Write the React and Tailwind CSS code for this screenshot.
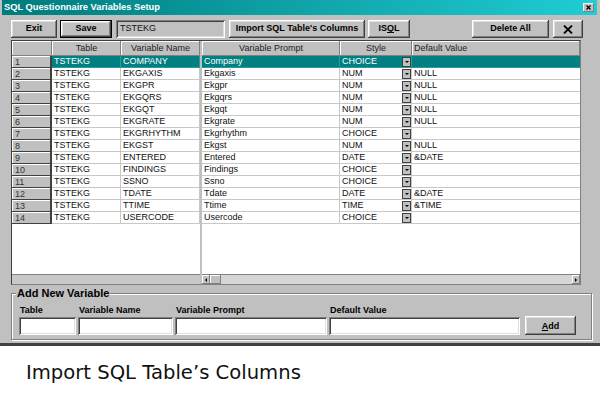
import React from "react";

const RAISED =
  "shadow-[inset_-1px_-1px_#404040,inset_1px_1px_#ffffff,inset_-2px_-2px_#808080,inset_2px_2px_#dfdfdf]";
const SUNKEN =
  "shadow-[inset_1px_1px_#808080,inset_-1px_-1px_#ffffff,inset_2px_2px_#404040,inset_-2px_-2px_#dfdfdf]";
const HEAD = "shadow-[inset_-1px_-1px_#808080,inset_1px_1px_#ffffff]";

const rows = [
  ["TSTEKG", "COMPANY", "Company", "CHOICE", ""],
  ["TSTEKG", "EKGAXIS", "Ekgaxis", "NUM", "NULL"],
  ["TSTEKG", "EKGPR", "Ekgpr", "NUM", "NULL"],
  ["TSTEKG", "EKGQRS", "Ekgqrs", "NUM", "NULL"],
  ["TSTEKG", "EKGQT", "Ekgqt", "NUM", "NULL"],
  ["TSTEKG", "EKGRATE", "Ekgrate", "NUM", "NULL"],
  ["TSTEKG", "EKGRHYTHM", "Ekgrhythm", "CHOICE", ""],
  ["TSTEKG", "EKGST", "Ekgst", "NUM", "NULL"],
  ["TSTEKG", "ENTERED", "Entered", "DATE", "&DATE"],
  ["TSTEKG", "FINDINGS", "Findings", "CHOICE", ""],
  ["TSTEKG", "SSNO", "Ssno", "CHOICE", ""],
  ["TSTEKG", "TDATE", "Tdate", "DATE", "&DATE"],
  ["TSTEKG", "TTIME", "Ttime", "TIME", "&TIME"],
  ["TSTEKG", "USERCODE", "Usercode", "CHOICE", ""],
];

function Button({ className = "", children }) {
  return (
    <div
      className={`h-[18px] bg-[#c0c0c0] flex items-center justify-center text-[9px] font-bold text-black ${RAISED} ${className}`}
    >
      {children}
    </div>
  );
}

function DropButton() {
  return (
    <div className="w-[9px] h-[10px] bg-[#c0c0c0] border border-[#404040] flex items-center justify-center shrink-0">
      <div className="w-0 h-0 border-x-[2px] border-x-transparent border-t-[2px] border-t-black" />
    </div>
  );
}

export default function App() {
  return (
    <div className="w-[600px] h-[395px] bg-white overflow-hidden font-['Liberation_Sans',Arial,sans-serif]">
      {/* window */}
      <div className="h-[346px] bg-[#c0c0c0] pl-[2px] pr-[3px] border-b-[3px] border-b-[#404040] flex flex-col">
        {/* title bar */}
        <div className="h-[15px] shrink-0 flex items-center justify-between pl-[2px] pr-[3px] bg-gradient-to-r from-[#007b7d] to-[#1fcdd5]">
          <span className="text-[9.3px] font-bold text-white leading-none">
            SQL Questionnaire Variables Setup
          </span>
          <div className={`w-[11px] h-[9px] bg-[#c0c0c0] flex items-center justify-center ${HEAD}`}>
            <svg width="5" height="5" viewBox="0 0 5 5">
              <path d="M0.5 0.5 L4.5 4.5 M4.5 0.5 L0.5 4.5" stroke="#000" strokeWidth="1.3" />
            </svg>
          </div>
        </div>

        {/* toolbar */}
        <div className="mt-[5px] flex items-center pl-[9px]">
          <Button className="w-[46px]">Exit</Button>
          <div className="ml-[3px] w-[52px] h-[18px] border border-black">
            <Button className="w-full h-full">Save</Button>
          </div>
          <div className={`ml-[4px] w-[109px] h-[18px] bg-[#c0c0c0] pl-[4px] pt-[2px] text-[9px] text-[#111] ${SUNKEN}`}>
            TSTEKG
          </div>
          <Button className="ml-[4px] w-[136px]">Import SQL Table's Columns</Button>
          <Button className="ml-[3px] w-[42px]">
            IS<span className="underline">Q</span>L
          </Button>
          <Button className="ml-[62px] w-[77px]">Delete All</Button>
          <Button className="ml-[4px] w-[30px]">
            <svg width="10" height="9" viewBox="0 0 10 9">
              <path d="M1 0.5 L9 8.5 M9 0.5 L1 8.5" stroke="#000" strokeWidth="1.8" />
            </svg>
          </Button>
        </div>

        {/* grid */}
        <div className="mt-[2px] ml-[9px] w-[570px] h-[245px] border border-t-[#404040] border-l-[#404040] border-r-[#808080] border-b-[#808080] flex text-[9px] leading-none">
          {/* left pane */}
          <div className="w-[188px] flex flex-col">
            <div className="h-[15px] flex shrink-0">
              <div className={`w-[40px] bg-[#c0c0c0] ${HEAD}`} />
              <div className={`w-[69px] bg-[#c0c0c0] flex items-center justify-center text-[#222] ${HEAD}`}>Table</div>
              <div className={`w-[79px] bg-[#c0c0c0] flex items-center justify-center text-[#222] ${HEAD}`}>Variable Name</div>
            </div>
            {rows.map((r, i) => {
              const cell =
                i === 0 ? "bg-[#008080] text-white border-[#2a9a9a]" : "bg-white text-[#111] border-[#c8c8c8]";
              return (
                <div key={i} className="h-[12px] flex">
                  <div className="w-[40px] bg-[#c0c0c0] pl-[3px] flex items-center text-[#333] shadow-[inset_-2px_-1px_#404040,inset_1px_1px_#ffffff]">
                    {i + 1}
                  </div>
                  <div className={`w-[69px] pl-[2px] flex items-center border-r border-b ${cell}`}>{r[0]}</div>
                  <div className={`w-[79px] pl-[2px] flex items-center border-r border-b ${cell}`}>{r[1]}</div>
                </div>
              );
            })}
            <div className="flex-1 bg-white" />
            <div className="h-[10px] bg-[#c8c8c8] border-t border-[#808080]" />
          </div>

          {/* splitter */}
          <div className="w-[2px] bg-[#c0c0c0]" />

          {/* right pane */}
          <div className="w-[378px] flex flex-col">
            <div className="h-[15px] flex shrink-0">
              <div className={`w-[138px] bg-[#c0c0c0] flex items-center justify-center text-[#222] ${HEAD}`}>Variable Prompt</div>
              <div className={`w-[72px] bg-[#c0c0c0] flex items-center justify-center text-[#222] ${HEAD}`}>Style</div>
              <div className={`w-[168px] bg-[#c0c0c0] flex items-center pl-[2px] text-[#222] ${HEAD}`}>Default Value</div>
            </div>
            {rows.map((r, i) => {
              const cell =
                i === 0 ? "bg-[#008080] text-white border-[#2a9a9a]" : "bg-white text-[#111] border-[#c8c8c8]";
              return (
                <div key={i} className="h-[12px] flex">
                  <div className={`w-[138px] pl-[2px] flex items-center border-r border-b ${cell}`}>{r[2]}</div>
                  <div className={`w-[72px] pl-[2px] flex items-center justify-between border-r border-b ${cell}`}>
                    <span>{r[3]}</span>
                    <DropButton />
                  </div>
                  <div className={`w-[168px] pl-[2px] flex items-center border-b ${cell}`}>{r[4]}</div>
                </div>
              );
            })}
            <div className="flex-1 bg-white" />
            <div className="h-[10px] flex border-t border-[#808080]">
              <div className={`w-[8px] bg-[#c0c0c0] flex items-center justify-center ${HEAD}`}>
                <div className="w-0 h-0 border-y-[2px] border-y-transparent border-r-[2px] border-r-black" />
              </div>
              <div className={`w-[11px] bg-[#c0c0c0] ${HEAD}`} />
              <div className="flex-1 bg-[#d6d6d6]" />
              <div className={`w-[8px] bg-[#c0c0c0] flex items-center justify-center ${HEAD}`}>
                <div className="w-0 h-0 border-y-[2px] border-y-transparent border-l-[2px] border-l-black" />
              </div>
            </div>
          </div>
        </div>

        {/* add new variable */}
        <fieldset className="mt-[2px] ml-[9px] w-[581px] border border-[#808080] shadow-[inset_1px_1px_#ffffff,1px_1px_#ffffff] pl-[7px] pt-[5px] pb-[4px] flex">
          <legend className="-ml-[3px] px-[1px] bg-[#c0c0c0] text-[11px] font-bold leading-[13px] text-black">
            Add New Variable
          </legend>
          <div className="flex items-end text-[9px] font-bold text-black leading-[10px]">
            <div className="flex flex-col w-[57px]">
              <span className="pl-[1px]">Table</span>
              <div className={`mt-[2px] h-[18px] bg-white ${SUNKEN}`} />
            </div>
            <div className="ml-[2px] flex flex-col w-[95px]">
              <span className="pl-[1px]">Variable Name</span>
              <div className={`mt-[2px] h-[18px] bg-white ${SUNKEN}`} />
            </div>
            <div className="ml-[2px] flex flex-col w-[152px]">
              <span className="pl-[1px]">Variable Prompt</span>
              <div className={`mt-[2px] h-[18px] bg-white ${SUNKEN}`} />
            </div>
            <div className="ml-[2px] flex flex-col w-[191px]">
              <span className="pl-[1px]">Default Value</span>
              <div className={`mt-[2px] h-[18px] bg-white ${SUNKEN}`} />
            </div>
            <Button className="ml-[5px] w-[51px] h-[19px]">
              <span className="underline">A</span>dd
            </Button>
          </div>
        </fieldset>
      </div>

      {/* caption */}
      <div className="mt-[17px] ml-[26px] font-['DejaVu_Sans',Verdana,sans-serif] text-[19.6px] leading-none text-[#111]">
        Import SQL Table’s Columns
      </div>
    </div>
  );
}
